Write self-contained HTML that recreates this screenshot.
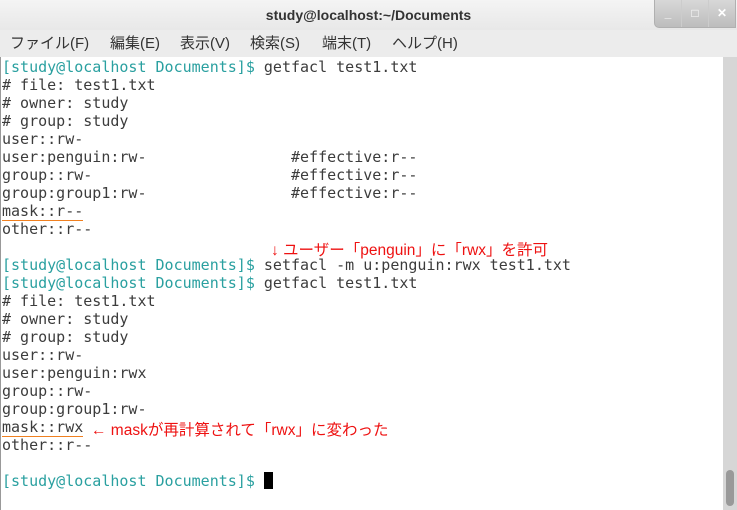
<!DOCTYPE html>
<html><head><meta charset="utf-8"><style>
body{margin:0;width:737px;height:510px;overflow:hidden;background:#fff;font-family:"Liberation Sans","Noto Sans CJK JP",sans-serif;position:relative}
.title{position:absolute;left:0;top:0;width:737px;height:30px;background:linear-gradient(#f4f4f4,#e8e8e8);text-align:center;line-height:30px;font-size:14px;color:#333;font-weight:bold}
.btns{position:absolute;left:654px;top:0;width:80px;height:27px;background:linear-gradient(#d8d8d8,#bdbdbd);border-radius:0 0 0 5px;border:1px solid #b0b0b0;border-top:none}
.btns span{position:absolute;top:0;width:26px;height:27px;text-align:center;line-height:27px;color:#fff;font-size:12px;font-weight:bold;border-left:1px solid #ccc}
.menu{position:absolute;left:0;top:30px;width:737px;height:27px;background:#ececec;font-size:15px;color:#333;line-height:28px}
.menu span{position:absolute;top:0;white-space:nowrap}
.term{position:absolute;left:0;top:57px;width:722px;height:453px;background:#fff;border-left:1px solid #999}
pre{margin:0;position:absolute;left:1px;top:1px;font-family:"DejaVu Sans Mono","Liberation Mono",monospace;font-size:15px;line-height:18px;color:#3c3c3c}
.p{color:#2aa0a0}
.u{border-bottom:1.5px solid #f08020}
.sb{position:absolute;left:723px;top:57px;width:14px;height:453px;background:#d6d6d6}
.th{position:absolute;left:726px;top:470px;width:8px;height:36px;background:#999;border-radius:4px}
.a{position:absolute;color:#ee1111;font-size:15.5px;font-family:"Liberation Sans","Noto Sans CJK JP",sans-serif;white-space:nowrap}
.cur{display:inline-block;width:9px;height:17px;background:#000;vertical-align:-3px}
</style></head><body>
<div class="title">study@localhost:~/Documents</div>
<div class="btns"><span style="left:0;border-left:none">_</span><span style="left:26px">□</span><span style="left:53px">✕</span></div>
<div class="menu"><span style="left:10px">ファイル(F)</span><span style="left:110px">編集(E)</span><span style="left:180px">表示(V)</span><span style="left:250px">検索(S)</span><span style="left:322px">端末(T)</span><span style="left:392px">ヘルプ(H)</span></div>
<div class="term"><pre><span class="p">[study@localhost Documents]$</span> getfacl test1.txt
# file: test1.txt
# owner: study
# group: study
user::rw-
user:penguin:rw-                #effective:r--
group::rw-                      #effective:r--
group:group1:rw-                #effective:r--
<span class="u">mask::r--</span>
other::r--

<span class="p">[study@localhost Documents]$</span> setfacl -m u:penguin:rwx test1.txt
<span class="p">[study@localhost Documents]$</span> getfacl test1.txt
# file: test1.txt
# owner: study
# group: study
user::rw-
user:penguin:rwx
group::rw-
group:group1:rw-
<span class="u">mask::rwx</span>
other::r--

<span class="p">[study@localhost Documents]$</span> <span class="cur"></span></pre></div>
<div class="a" style="left:271px;top:238px">↓ ユーザー「penguin」に「rwx」を許可</div>
<div class="a" style="left:91px;top:418px">← maskが再計算されて「rwx」に変わった</div>
<div class="sb"></div><div class="th"></div>
</body></html>
